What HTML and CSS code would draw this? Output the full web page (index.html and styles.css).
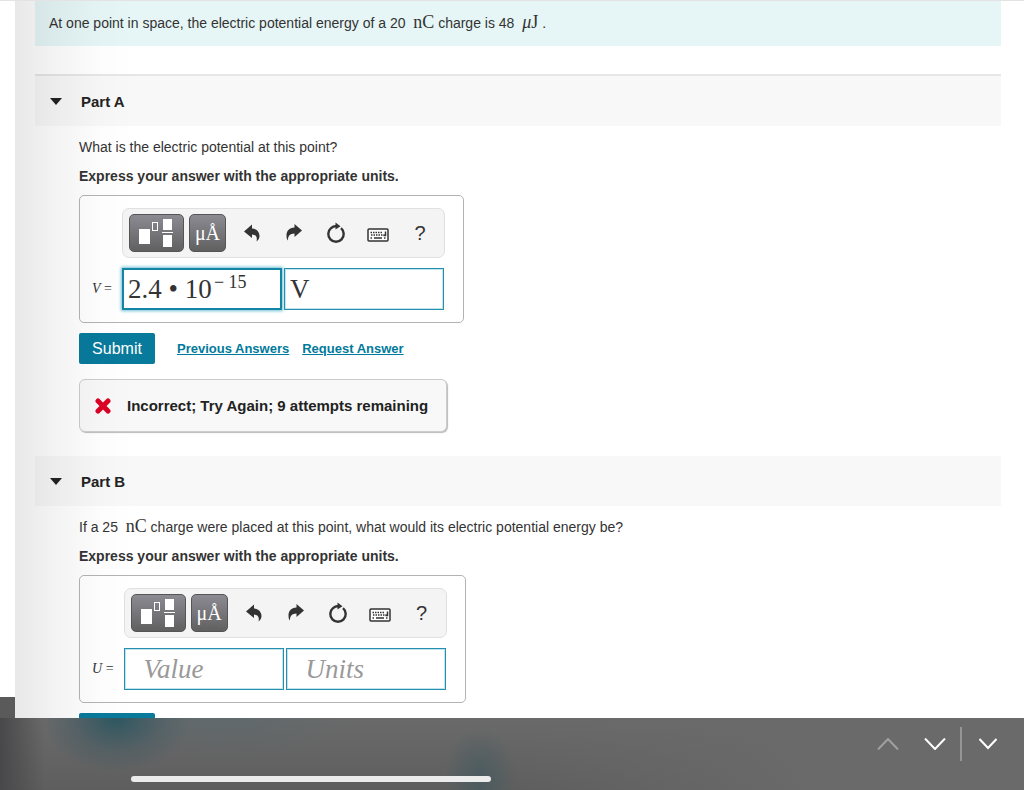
FILE: index.html
```html
<!DOCTYPE html>
<html lang="en">

<head>
    <meta charset="UTF-8" />
    <meta name="viewport" content="width=device-width, initial-scale=1.0" />
    <title>Electric Potential</title>
    <link rel="stylesheet" href="styles.css">
</head>

<body>
    <!-- Icons shared by both toolbars -->
    <svg class="sprite" aria-hidden="true">
        <symbol id="icon-templates" viewBox="0 0 36 30">
            <rect x="1" y="11" width="11" height="15" fill="#fff" />
            <rect x="14.5" y="4.5" width="5" height="8" fill="none" stroke="#fff" />
            <rect x="25" y="1" width="9" height="11" fill="#fff" />
            <rect x="24" y="14" width="11" height="1" fill="#fff" />
            <rect x="25" y="17" width="9" height="12" fill="#fff" />
        </symbol>
        <symbol id="icon-undo" viewBox="0 0 16 18">
            <path d="M0 7.500 8 0.500V4.500C12.500 4.700 15.500 8 15.500 12C15.500 14 14.500 16 12.500 17.500C13.600 13 12 10.800 8 10.500V14Z" fill="#333" />
        </symbol>
        <symbol id="icon-redo" viewBox="0 0 16 18">
            <path d="M16 6.500 8.500 0V3.500C3 3.700 0.500 7 0.500 11.500C0.500 14 1 15.600 1.800 16.600C2 12 4 9.800 8.500 9.600V13Z" fill="#333" />
        </symbol>
        <symbol id="icon-reset" viewBox="0 0 20 22">
            <path d="M15 6.200A7.700 7.700 0 1 1 5 6.200Q7 4.300 10.500 4" fill="none" stroke="#333" stroke-width="2.400" />
            <path d="M9.500 0.500 14.500 4.200 9.500 7.500Z" fill="#333" />
        </symbol>
        <symbol id="icon-keyboard" viewBox="0 0 22 14">
            <rect x="1" y="1" width="20" height="12" rx="1" fill="#fff" stroke="#333" stroke-width="1.500" />
            <path d="M3.500 4.500H16M4 7H17.500" stroke="#333" stroke-width="1.500" stroke-dasharray="1.500 1" />
            <path d="M18.500 3.500V7.500H16.500M3.500 10H5M7 10H15M17 10H18.500" fill="none" stroke="#333" stroke-width="1.500" />
        </symbol>
    </svg>

    <div class="viewer">
        <div class="gutter"></div>
        <main class="page">
            <p class="intro">At one point in space, the electric potential energy of a 20 &nbsp;<span class="math">nC</span> charge is 48 &nbsp;<span class="math"><i>μ</i>J</span> .</p>

            <section class="part">
                <h2 class="part-header part-header-first"><button type="button" class="toggle"><span class="caret"></span>Part A</button></h2>
                <div class="part-body">
                    <p class="question">What is the electric potential at this point?</p>
                    <p class="instructions">Express your answer with the appropriate units.</p>

                    <form>
                        <div class="answer-box">
                            <div class="toolbar">
                                <button type="button" class="tool tool-dark tool-wide" aria-label="Templates"><svg width="36" height="30"><use href="#icon-templates" /></svg></button>
                                <button type="button" class="tool tool-dark tool-units">μÅ</button>
                                <button type="button" class="tool" aria-label="Undo"><svg width="16" height="18"><use href="#icon-undo" /></svg></button>
                                <button type="button" class="tool" aria-label="Redo"><svg width="16" height="18"><use href="#icon-redo" /></svg></button>
                                <button type="button" class="tool" aria-label="Reset"><svg width="20" height="22"><use href="#icon-reset" /></svg></button>
                                <button type="button" class="tool tool-keyboard" aria-label="Keyboard shortcuts"><svg width="22" height="14"><use href="#icon-keyboard" /></svg></button>
                                <button type="button" class="tool tool-help">?</button>
                            </div>
                            <label class="variable" for="value-a"><i>V</i> =</label>
                            <div class="fields">
                                <div class="field field-active">
                                    <input type="text" class="base" id="value-a" value="2.4 • 10" />
                                    <input type="text" class="exponent" aria-label="Exponent" value="− 15" />
                                </div>
                                <input type="text" class="field" aria-label="Units" value="V" />
                            </div>
                        </div>
                        <div class="actions">
                            <button type="submit" class="submit">Submit</button>
                            <a href="#previous">Previous Answers</a>
                            <a href="#request">Request Answer</a>
                        </div>
                    </form>

                    <div class="feedback" role="status">
                        <svg width="16" height="16" viewBox="0 0 16 16" aria-hidden="true">
                            <path d="M3 3 13 13M13 3 3 13" stroke="#dc0024" stroke-width="5" stroke-linecap="round" />
                        </svg>
                        Incorrect; Try Again; 9 attempts remaining
                    </div>
                </div>
            </section>

            <section class="part">
                <h2 class="part-header"><button type="button" class="toggle"><span class="caret"></span>Part B</button></h2>
                <div class="part-body">
                    <p class="question">If a 25 &nbsp;<span class="math">nC</span> charge were placed at this point, what would its electric potential energy be?</p>
                    <p class="instructions">Express your answer with the appropriate units.</p>

                    <form>
                        <div class="answer-box">
                            <div class="toolbar">
                                <button type="button" class="tool tool-dark tool-wide" aria-label="Templates"><svg width="36" height="30"><use href="#icon-templates" /></svg></button>
                                <button type="button" class="tool tool-dark tool-units">μÅ</button>
                                <button type="button" class="tool" aria-label="Undo"><svg width="16" height="18"><use href="#icon-undo" /></svg></button>
                                <button type="button" class="tool" aria-label="Redo"><svg width="16" height="18"><use href="#icon-redo" /></svg></button>
                                <button type="button" class="tool" aria-label="Reset"><svg width="20" height="22"><use href="#icon-reset" /></svg></button>
                                <button type="button" class="tool tool-keyboard" aria-label="Keyboard shortcuts"><svg width="22" height="14"><use href="#icon-keyboard" /></svg></button>
                                <button type="button" class="tool tool-help">?</button>
                            </div>
                            <label class="variable" for="value-b"><i>U</i> =</label>
                            <div class="fields">
                                <input type="text" class="field" id="value-b" placeholder="Value" />
                                <input type="text" class="field" aria-label="Units" placeholder="Units" />
                            </div>
                        </div>
                        <div class="actions">
                            <button type="submit" class="submit" aria-label="Submit"></button>
                        </div>
                    </form>
                </div>
            </section>
        </main>
    </div>

    <footer class="input-bar">
        <button type="button" class="nav nav-disabled" aria-label="Previous field"><svg width="22" height="12" viewBox="0 0 22 12"><path d="M1 11.500 11 1 21 11.500" /></svg></button>
        <button type="button" class="nav" aria-label="Next field"><svg width="22" height="12" viewBox="0 0 22 12"><path d="M1 0.500 11 11 21 0.500" /></svg></button>
        <span class="divider"></span>
        <button type="button" class="nav nav-close" aria-label="Close keyboard"><svg width="18" height="12" viewBox="0 0 18 12"><path d="M0.500 1 9 10 17.500 1" /></svg></button>
        <span class="home-indicator"></span>
    </footer>
</body>

</html>
```

FILE: styles.css
```css
* {
    box-sizing: border-box;
}

body {
    display: flex;
    flex-direction: column;
    height: 100vh;
    margin: 0;
    font-family: "Liberation Sans", Arial, sans-serif;
    font-size: 14px;
    line-height: 20px;
    color: #333;
    background: #fff;
}

button,
input {
    font-family: inherit;
    color: inherit;
    padding: 0;
    border: none;
    background: none;
}

p,
h2 {
    margin: 0;
}

.sprite {
    display: none;
}

.viewer {
    display: flex;
    flex: 1;
    min-height: 0;
    border-top: 1px solid #e3e3e3;
}

.gutter {
    display: flex;
    width: 15px;
}

.gutter::after {
    content: "";
    flex: 1;
    height: 21px;
    align-self: flex-end;
    background: #5a5a5a;
}

.page {
    position: relative;
    flex: 1;
    padding: 0 23px 0 20px;
    overflow: hidden;
}

/* shadow cast by the side panel */
.page::after {
    content: "";
    position: absolute;
    top: 0;
    bottom: 0;
    left: 0;
    width: 120px;
    background: linear-gradient(to right, rgba(0, 0, 0, 0.09), rgba(0, 0, 0, 0.05) 30%, rgba(0, 0, 0, 0.01) 70%, transparent);
    pointer-events: none;
}

.intro {
    height: 45px;
    margin-bottom: 28px;
    padding: 12px 14px;
    background: #e6f6f6;
}

.math {
    font-family: "Liberation Serif", serif;
    font-size: 18px;
    line-height: 18px;
}

.part-header {
    height: 50px;
    background: #f8f8f8;
}

.part-header-first {
    height: 52px;
    border-top: 2px solid #e6e6e6;
}

.toggle {
    display: flex;
    align-items: center;
    gap: 19px;
    width: 100%;
    height: 100%;
    padding-left: 15px;
    font-size: 15px;
    font-weight: bold;
    color: #222;
}

.caret {
    border: 6px solid transparent;
    border-top: 7px solid #222;
    border-bottom: 0;
}

.part-body {
    padding: 11px 0 24px 44px;
}

.question {
    margin-bottom: 9px;
}

.instructions {
    margin-bottom: 9px;
    font-weight: bold;
}

.answer-box {
    display: inline-grid;
    grid-template-columns: auto auto;
    gap: 10px;
    align-items: center;
    padding: 12px 18px 12px 12px;
    border: 1px solid #b3b3b3;
    border-radius: 5px;
    vertical-align: top;
}

.toolbar {
    grid-column: 2;
    display: flex;
    align-items: center;
    height: 50px;
    padding: 0 3px 0 6px;
    border: 1px solid #e0e0e0;
    border-radius: 7px;
    background: #f4f4f4;
}

.tool {
    display: flex;
    align-items: center;
    justify-content: center;
    width: 42px;
    height: 38px;
}

.tool-dark {
    width: 37px;
    margin-right: 5px;
    border: 1px solid #555;
    border-radius: 5px;
    background: linear-gradient(#8c8b93, #606060);
    color: #fff;
}

.tool-wide {
    width: 55px;
}

.tool-units {
    font-family: "Liberation Serif", serif;
    font-size: 20px;
}

.tool-keyboard {
    padding-top: 4px;
}

.tool-help {
    font-size: 20px;
}

.variable {
    font-family: "Liberation Serif", serif;
    font-size: 14px;
}

.fields {
    display: flex;
    gap: 2px;
}

.field {
    display: flex;
    width: 160px;
    height: 42px;
    padding: 0 5px;
    border: 1px solid #2291b0;
    box-shadow: inset 0 0 0 1px #c5e2ea;
    font-family: "Liberation Serif", serif;
    font-size: 27px;
    outline: none;
}

.field::placeholder {
    padding-left: 14px;
    font-style: italic;
    color: #999;
    opacity: 1;
}

.field-active {
    padding: 0 4px;
    border: 2px solid #1585a5;
    box-shadow: 0 0 3px 1px #6fc0d6;
}

.base {
    width: 86px;
    font-size: 27px;
    outline: none;
}

.exponent {
    flex: 1;
    min-width: 0;
    height: 24px;
    font-size: 18px;
    outline: none;
}

.actions {
    display: flex;
    align-items: center;
    gap: 13px;
    margin: 10px 0 15px;
    font-weight: bold;
    font-size: 13px;
}

.actions a {
    color: #007a9c;
}

.submit {
    width: 76px;
    height: 31px;
    margin-right: 9px;
    border-radius: 2px;
    background: #087a9c;
    color: #fff;
    font-size: 16px;
}

.feedback {
    display: inline-flex;
    align-items: center;
    gap: 16px;
    height: 53px;
    padding: 0 18px 0 15px;
    border: 1px solid #ccc;
    border-radius: 6px;
    background: #f8f8f8;
    box-shadow: 1px 1px 1px #bbb;
    font-size: 15px;
    font-weight: bold;
    color: #222;
    vertical-align: top;
}

.input-bar {
    position: relative;
    display: flex;
    align-items: flex-start;
    justify-content: flex-end;
    height: 72px;
    padding: 9px 24px 0 0;
    background:
        radial-gradient(ellipse 75px 55px at 116px 0, rgba(32, 82, 94, 0.8), rgba(60, 88, 98, 0.4) 60%, transparent),
        radial-gradient(ellipse 36px 50px at 480px 60px, rgba(60, 88, 94, 0.6), transparent),
        radial-gradient(ellipse 130px 40px at 220px 0, rgba(80, 104, 112, 0.4), transparent),
        linear-gradient(to right, #48484a, rgba(106, 106, 106, 0) 45px),
        linear-gradient(to right, transparent 50%, #6a6a6a 80%),
        linear-gradient(#6a6a6a, #5e5e5e);
}

.nav {
    display: flex;
    align-items: center;
    justify-content: center;
    width: 47px;
    height: 34px;
}

.nav path {
    fill: none;
    stroke: #fff;
    stroke-width: 2;
}

.nav-disabled path {
    stroke: #a0a0a0;
}

.divider {
    width: 2px;
    height: 34px;
    margin: 0 2px;
    background: #959595;
}

.nav-close {
    width: 24px;
    margin-left: 12px;
}

.home-indicator {
    position: absolute;
    left: 131px;
    bottom: 8px;
    width: 360px;
    height: 6px;
    border-radius: 3px;
    background: #ececec;
}
```
